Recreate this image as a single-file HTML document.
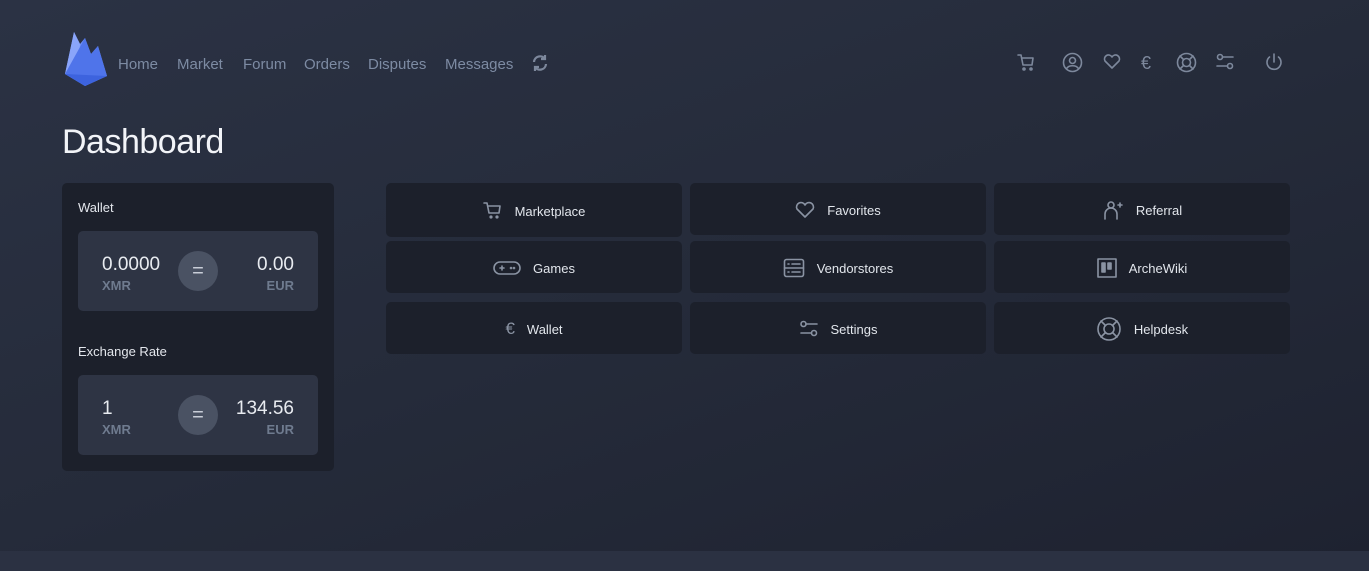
<!DOCTYPE html>
<html><head><meta charset="utf-8"><style>
*{margin:0;padding:0;box-sizing:border-box}
body{width:1369px;height:571px;overflow:hidden;font-family:"Liberation Sans","DejaVu Sans",sans-serif;background:linear-gradient(160deg,#2b3244 0%,#252b3a 50%,#1e2230 100%);position:relative;color:#e6e9ef}
.foot{position:absolute;left:0;top:551px;width:1369px;height:20px;background:#2b3142}
.nav a{position:absolute;top:56px;font-size:15px;color:#7d8ba3;text-decoration:none}
h1{position:absolute;left:62px;top:123px;font-size:34px;font-weight:normal;color:#f2f4f8;letter-spacing:-0.5px}
.panel{position:absolute;left:62px;top:183px;width:272px;height:288px;background:#1c202b;border-radius:5px}
.lbl{position:absolute;left:16px;font-size:13px;color:#e3e6ec}
.box{position:absolute;left:16px;width:240px;height:80px;background:#2e3444;border-radius:5px}
.box .l{position:absolute;left:24px;top:23px;font-size:19px;color:#e8ebf0}
.box .r{position:absolute;right:24px;top:23px;font-size:19px;color:#e8ebf0;text-align:right}
.box small{display:block;font-size:13px;font-weight:bold;color:#6f7b8f;margin-top:2px}
.box .eq{position:absolute;left:100px;top:20px;width:40px;height:40px;border-radius:50%;background:#4a5263;color:#c9ced8;font-size:20px;text-align:center;line-height:40px}
.card{position:absolute;width:296px;background:#1c202b;border-radius:5px;display:flex;align-items:center;justify-content:center;font-size:13px;color:#e2e6ec;gap:12px;padding-top:2px}
.card svg,.ic svg{stroke:#8a93a3;fill:none;stroke-width:1.6;stroke-linecap:round;stroke-linejoin:round}
.ic{position:absolute;top:52px}
.ic svg{stroke:#7d889c}
</style></head><body>
<svg style="position:absolute;left:65px;top:32px" width="42" height="54" viewBox="0 0 42 54">
<polygon points="9,0 0,42 20,54 42,44 33,14 26,22 20,6 15,12" fill="#6d8ef5"/>
<polygon points="9,0 0,42 14,30 15,12" fill="#8aa5fa"/>
<polygon points="0,42 20,54 42,44 33,14 26,22 20,6" fill="#4f74ea"/>
<polygon points="0,42 20,54 42,44" fill="#3d63de"/>
</svg>
<div class="nav"><a style="left:118px">Home</a><a style="left:177px">Market</a><a style="left:243px">Forum</a><a style="left:304px">Orders</a><a style="left:368px">Disputes</a><a style="left:445px">Messages</a></div>
<svg style="position:absolute;left:531px;top:54px" width="18" height="18" viewBox="0 0 18 18" fill="none" stroke="#7d889c" stroke-width="2.2"><path d="M3 8a6 6 0 0 1 11-3"/><path d="M14 1v4h-4"/><path d="M15 10a6 6 0 0 1-11 3"/><path d="M4 17v-4h4"/></svg>
<div class="ic" style="left:1017px"><svg width="18" height="20" viewBox="0 0 18 20"><path d="M1 3h3l2 10h9l1-7H5"/><circle cx="7" cy="17" r="1"/><circle cx="14" cy="17" r="1"/></svg></div>
<div class="ic" style="left:1062px"><svg width="21" height="21" viewBox="0 0 21 21"><circle cx="10.5" cy="10.5" r="9"/><circle cx="10.5" cy="8.5" r="3"/><path d="M5 16c2-3 9-3 11 0"/></svg></div>
<div class="ic" style="left:1103px"><svg width="18" height="20" viewBox="0 0 18 20"><path d="M9 16L2 9a3.8 3.8 0 0 1 7-4 3.8 3.8 0 0 1 7 4z"/></svg></div>
<div class="ic" style="left:1141px;top:53px;font-size:18px;color:#7d889c">€</div>
<div class="ic" style="left:1176px"><svg width="21" height="21" viewBox="0 0 21 21"><circle cx="10.5" cy="10.5" r="9"/><circle cx="10.5" cy="10.5" r="4"/><path d="M4 4l3.5 3.5M17 4l-3.5 3.5M4 17l3.5-3.5M17 17l-3.5-3.5"/></svg></div>
<div class="ic" style="left:1215px"><svg width="20" height="20" viewBox="0 0 20 20"><circle cx="5" cy="5" r="2.5"/><path d="M7.5 5H18"/><circle cx="15" cy="14" r="2.5"/><path d="M2 14h10.5"/></svg></div>
<div class="ic" style="left:1265px"><svg width="18" height="20" viewBox="0 0 18 20"><path d="M9 2v8"/><path d="M4.5 5a7 7 0 1 0 9 0"/></svg></div>
<h1>Dashboard</h1>
<div class="panel">
<div class="lbl" style="top:17px">Wallet</div>
<div class="box" style="top:48px"><div class="l">0.0000<small>XMR</small></div><div class="eq">=</div><div class="r">0.00<small>EUR</small></div></div>
<div class="lbl" style="top:161px">Exchange Rate</div>
<div class="box" style="top:192px"><div class="l">1<small>XMR</small></div><div class="eq">=</div><div class="r">134.56<small>EUR</small></div></div>
</div>
<div class="card" style="left:386px;top:183px;height:54px"><svg width="20" height="20" viewBox="0 0 20 20"><path d="M1 2h3l2 10h10l1-7H5"/><circle cx="8" cy="16" r=".8"/><circle cx="14" cy="16" r=".8"/></svg>Marketplace</div>
<div class="card" style="left:690px;top:183px;height:52px"><svg width="20" height="18" viewBox="0 0 20 18"><path d="M10 16L2 8a4.2 4.2 0 0 1 8-4 4.2 4.2 0 0 1 8 4z"/></svg>Favorites</div>
<div class="card" style="left:994px;top:183px;height:52px"><svg width="22" height="20" viewBox="0 0 22 20"><circle cx="9" cy="5" r="3"/><path d="M3 19v-5a6 6 0 0 1 12 0v5"/><path d="M18 3v4M16 5h4"/></svg>Referral</div>
<div class="card" style="left:386px;top:241px;height:52px"><svg width="28" height="16" viewBox="0 0 28 16"><rect x="1" y="2" width="26" height="12" rx="6"/><path d="M7 8h4M9 6v4"/><circle cx="18" cy="8" r=".5"/><circle cx="21" cy="8" r=".5"/></svg>Games</div>
<div class="card" style="left:690px;top:241px;height:52px"><svg width="22" height="20" viewBox="0 0 22 20"><rect x="1.5" y="1.5" width="19" height="17" rx="2"/><path d="M1.5 10h19M5 6h1M9 6h8M5 14h1M9 14h8"/></svg>Vendorstores</div>
<div class="card" style="left:994px;top:241px;height:52px"><svg width="20" height="20" viewBox="0 0 20 20"><rect x="1" y="1" width="18" height="18"/><rect x="5" y="5" width="3" height="9" fill="#8a93a3"/><rect x="11" y="5" width="3" height="6" fill="#8a93a3"/></svg>ArcheWiki</div>
<div class="card" style="left:386px;top:302px;height:52px"><span style="color:#8a93a3;font-size:17px">€</span>Wallet</div>
<div class="card" style="left:690px;top:302px;height:52px"><svg width="20" height="18" viewBox="0 0 20 18"><circle cx="4.5" cy="4" r="2.5"/><path d="M7 4h11"/><circle cx="15" cy="13" r="2.5"/><path d="M2 13h10.5"/></svg>Settings</div>
<div class="card" style="left:994px;top:302px;height:52px"><svg width="26" height="26" viewBox="0 0 26 26"><circle cx="13" cy="13" r="11"/><circle cx="13" cy="13" r="5"/><path d="M5 5l4.5 4.5M21 5l-4.5 4.5M5 21l4.5-4.5M21 21l-4.5-4.5"/></svg>Helpdesk</div>
<div class="foot"></div>
</body></html>
